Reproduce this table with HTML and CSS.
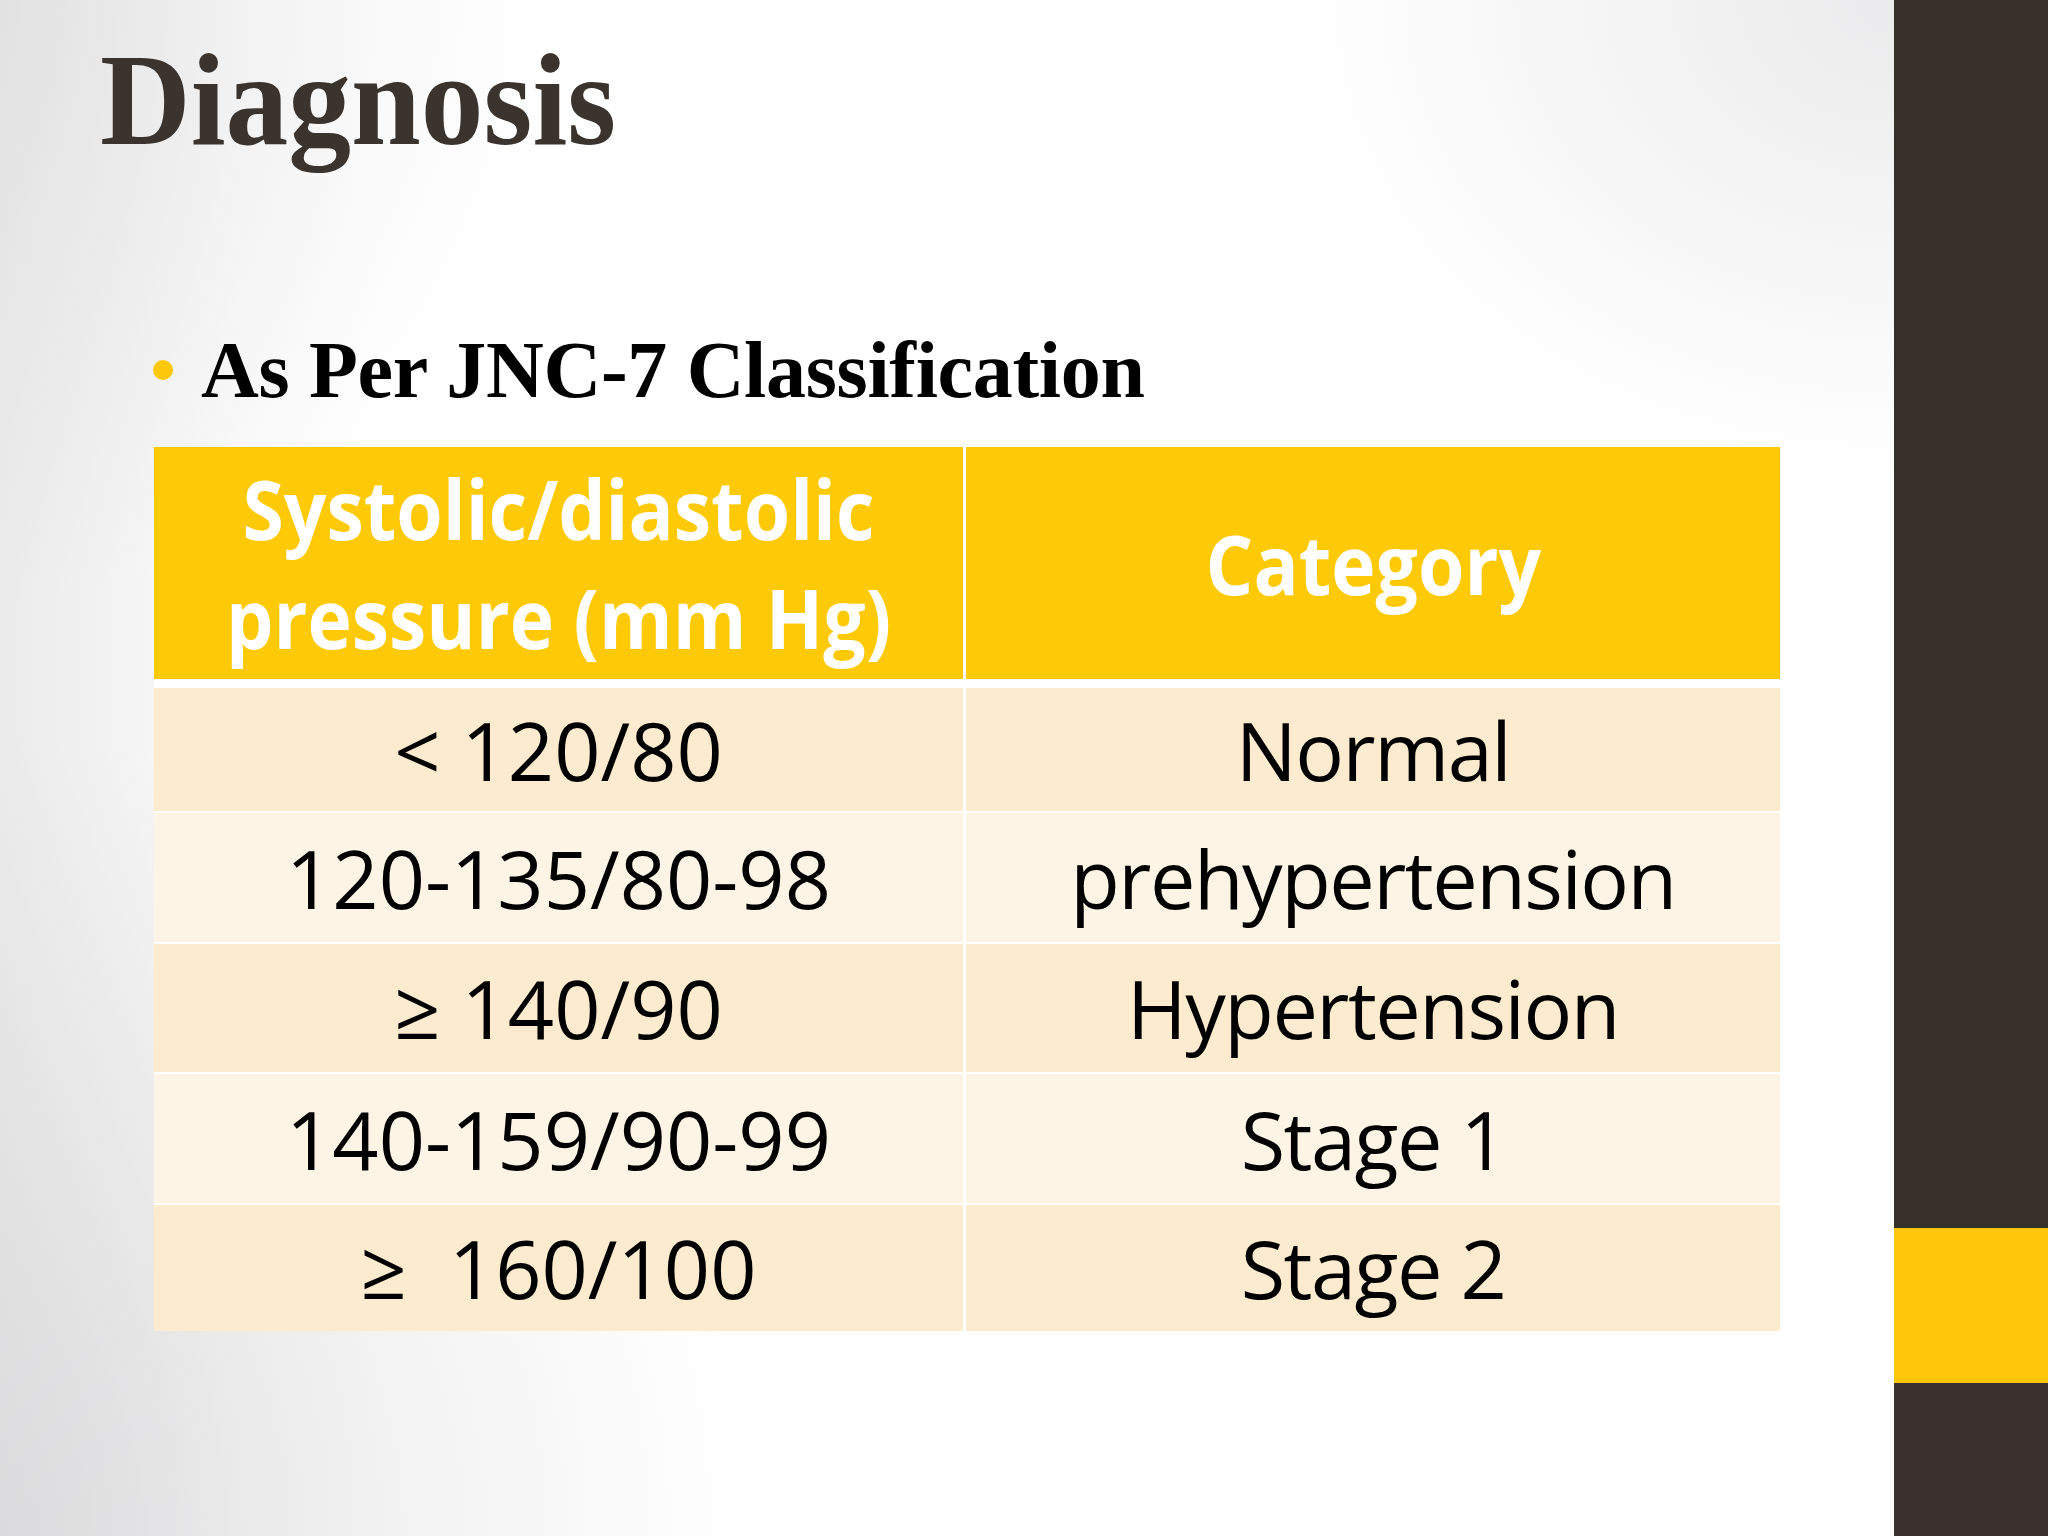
FILE: index.html
```html
<!DOCTYPE html>
<html lang="en">
<head>
<meta charset="utf-8">
<title>Diagnosis</title>
<link rel="stylesheet" href="styles.css">
</head>
<body>
<div class="slide">
  <main class="content">
    <h1 class="title"><span class="title-text">Diagnosis</span></h1>
    <div class="bullet">
      <span class="dot"></span>
      <span class="bullet-text">As Per JNC-7 Classification</span>
    </div>
    <table class="bp">
      <thead>
        <tr class="head-row">
          <th class="c1"><span class="hd">Systolic/diastolic<br>pressure (mm Hg)</span></th>
          <th class="c2"><span class="hd">Category</span></th>
        </tr>
      </thead>
      <tbody>
        <tr class="r1 band1"><td class="c1">&lt; 120/80</td><td class="c2 word">Normal</td></tr>
        <tr class="r2 band2"><td class="c1">120-135/80-98</td><td class="c2 word">prehypertension</td></tr>
        <tr class="r3 band1"><td class="c1">≥ 140/90</td><td class="c2 word">Hypertension</td></tr>
        <tr class="r4 band2"><td class="c1">140-159/90-99</td><td class="c2 word">Stage 1</td></tr>
        <tr class="r5 band1"><td class="c1">≥&nbsp; 160/100</td><td class="c2 word">Stage 2</td></tr>
      </tbody>
    </table>
  </main>
  <aside class="rail">
    <div class="rail-top"></div>
    <div class="rail-accent"></div>
    <div class="rail-bottom"></div>
  </aside>
</div>
</body>
</html>
```
FILE: styles.css
```css
html, body {
  margin: 0;
  padding: 0;
}

body {
  width: 2048px;
  height: 1536px;
  overflow: hidden;
  background: #ffffff;
}

.slide {
  display: flex;
  width: 2048px;
  height: 1536px;
}

.content {
  flex: 1;
  box-sizing: border-box;
  padding: 34px 0 0 100px;
  background:
    radial-gradient(ellipse 600px 480px at 100% 0, rgba(215, 215, 218, 0.5), rgba(255, 255, 255, 0) 100%),
    radial-gradient(ellipse 750px 800px at 0 100%, rgba(205, 205, 208, 0.55), rgba(255, 255, 255, 0) 100%),
    radial-gradient(ellipse 550px 600px at 0 0, rgba(215, 215, 215, 0.45), rgba(255, 255, 255, 0) 100%),
    linear-gradient(to right, #ebebeb 0, #fbfbfb 240px, #ffffff 380px);
}

.title {
  margin: 0;
  font-family: "Liberation Serif", "Times New Roman", serif;
  font-weight: bold;
  font-size: 131px;
  line-height: 131px;
  color: #3a332e;
}

.title-text {
  display: inline-block;
  transform: scaleX(0.958);
  transform-origin: left center;
}

.bullet {
  display: flex;
  align-items: center;
  gap: 28px;
  margin: 165px 0 0 53px;
}

.dot {
  width: 20px;
  height: 20px;
  border-radius: 50%;
  background: #fec80a;
  flex: none;
}

.bullet-text {
  font-family: "Liberation Serif", "Times New Roman", serif;
  font-weight: bold;
  font-size: 80px;
  line-height: 80px;
  letter-spacing: -0.3px;
  color: #000000;
}

.bp {
  margin: 37px 0 0 54px;
  width: 1626px;
  table-layout: fixed;
  border-collapse: separate;
  border-spacing: 0;
  font-family: "Open Sans", "Liberation Sans", sans-serif;
  text-align: center;
}

.bp th,
.bp td {
  padding: 0;
  vertical-align: middle;
  white-space: nowrap;
}

.bp .c1 {
  width: 809px;
  border-right: 3px solid #ffffff;
}

.bp th {
  background: #fec906;
  color: #ffffff;
  font-weight: bold;
  font-size: 82px;
  line-height: 109px;
  border-bottom: 9px solid #ffffff;
}

.hd {
  display: inline-block;
  transform: scaleX(0.915);
}

.head-row { height: 241px; }

.bp td {
  font-size: 81px;
  line-height: 100px;
  color: #000000;
}

.bp td.word {
  letter-spacing: -1.5px;
}

.bp tbody tr + tr td {
  border-top: 2px solid #ffffff;
}

.band1 td { background: #fdebcf; }
.band2 td { background: #fdf4e6; }

.r1 { height: 123px; }
.r2 { height: 131px; }
.r3 { height: 130px; }
.r4 { height: 131px; }
.r5 { height: 128px; }

.rail {
  width: 154px;
  flex: none;
  display: flex;
  flex-direction: column;
}

.rail-top {
  height: 1228px;
  background: #37302a;
}

.rail-accent {
  height: 155px;
  background: #fec70b;
}

.rail-bottom {
  flex: 1;
  background: #3b302e;
}
```
